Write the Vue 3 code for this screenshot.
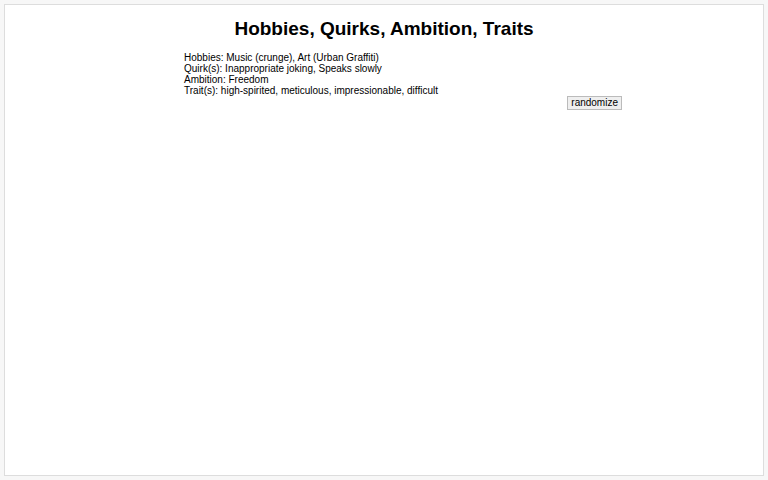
<template>
    <main class="page">
        <h1>Hobbies, Quirks, Ambition, Traits</h1>
        <div class="generator">
            <div class="result">
                <div v-for="row in rows" :key="row.label">{{ row.label }}: {{ row.value }}</div>
            </div>
            <button type="button" class="randomize" @click="randomize">randomize</button>
        </div>
    </main>
</template>

<script setup>
import { ref } from 'vue';

const options = {
    hobbies: ['Music (crunge)', 'Art (Urban Graffiti)', 'Gardening', 'Chess', 'Cooking'],
    quirks: ['Inappropriate joking', 'Speaks slowly', 'Hums constantly', 'Avoids eye contact'],
    ambitions: ['Freedom', 'Power', 'Fame', 'Knowledge'],
    traits: ['high-spirited', 'meticulous', 'impressionable', 'difficult', 'loyal', 'stubborn']
};

const rows = ref([
    { label: 'Hobbies', value: 'Music (crunge), Art (Urban Graffiti)' },
    { label: 'Quirk(s)', value: 'Inappropriate joking, Speaks slowly' },
    { label: 'Ambition', value: 'Freedom' },
    { label: 'Trait(s)', value: 'high-spirited, meticulous, impressionable, difficult' }
]);

const pick = (list, count) => {
    const pool = [...list];
    const picked = [];
    while (picked.length < count) {
        picked.push(pool.splice(Math.floor(Math.random() * pool.length), 1)[0]);
    }
    return picked.join(', ');
};

const randomize = () => {
    rows.value = [
        { label: 'Hobbies', value: pick(options.hobbies, 2) },
        { label: 'Quirk(s)', value: pick(options.quirks, 2) },
        { label: 'Ambition', value: pick(options.ambitions, 1) },
        { label: 'Trait(s)', value: pick(options.traits, 4) }
    ];
};
</script>

<style>
body {
    background: #f7f7f7;
}
</style>

<style scoped>
.page {
    box-sizing: border-box;
    min-height: calc(100vh - 8px);
    margin: 4px;
    padding: 12px;
    border: 1px solid #ddd;
    background: #fff;
    color: #000;
    font-family: "Liberation Sans", Arial, sans-serif;
    font-size: 10px;
    line-height: 11px;
}

h1 {
    margin: 0 0 12px;
    font-size: 19px;
    line-height: 23px;
    text-align: center;
}

.generator {
    display: flex;
    flex-direction: column;
    box-sizing: border-box;
    max-width: 476px;
    margin: 0 auto;
    padding-left: 38px;
}

.randomize {
    align-self: flex-end;
    padding: 0 3px;
    border: 1px solid #bbb;
    background: #efefef;
    color: #000;
    font: inherit;
    line-height: 12px;
}
</style>
